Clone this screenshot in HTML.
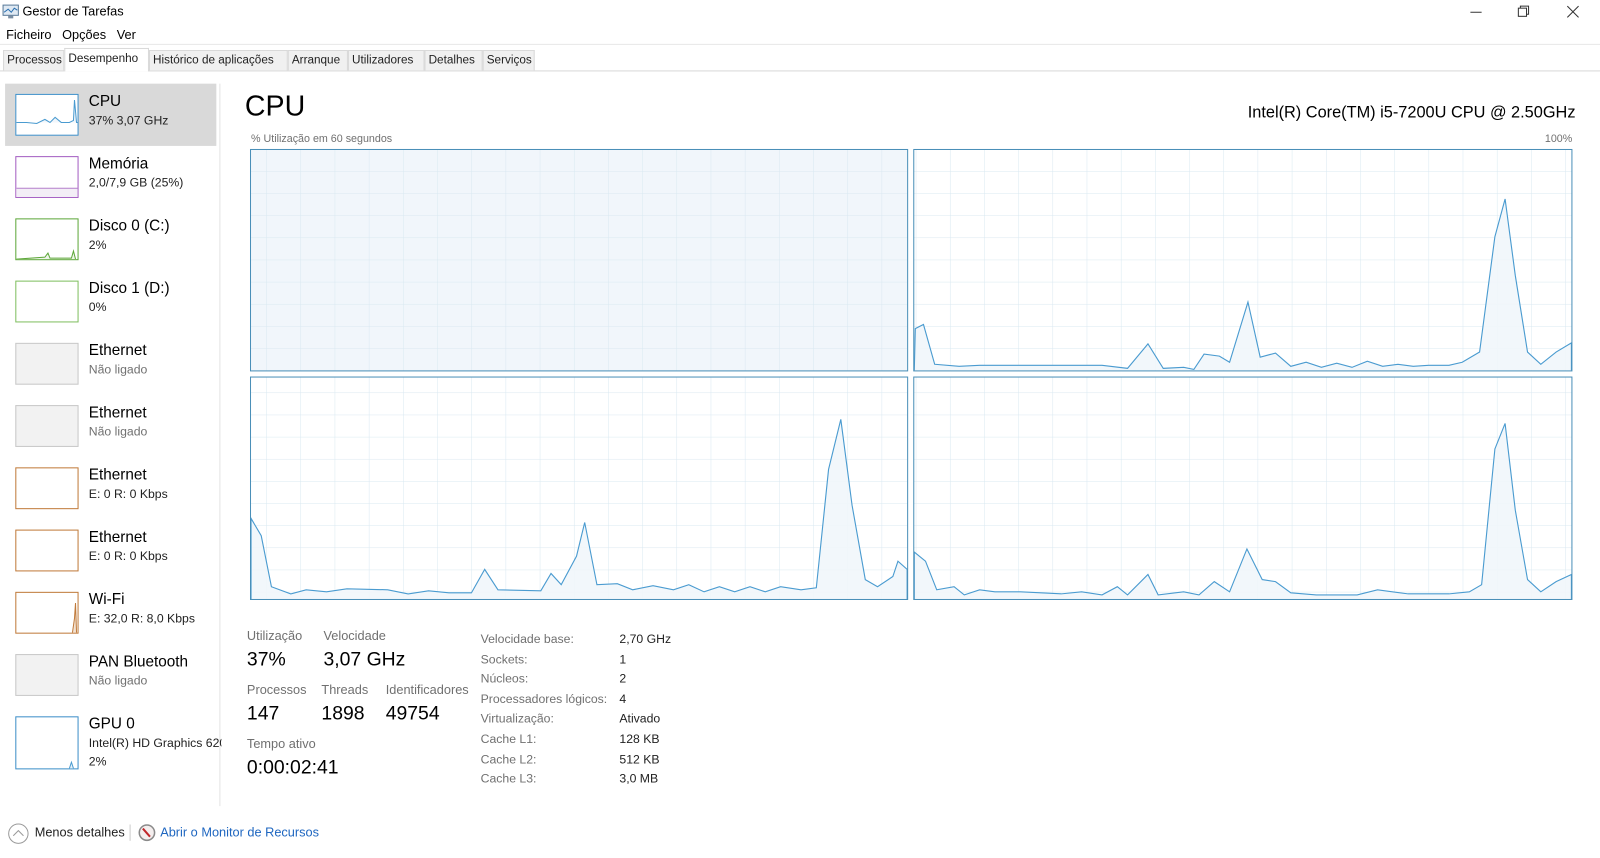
<!DOCTYPE html>
<html><head><meta charset="utf-8"><style>
*{margin:0;padding:0;box-sizing:border-box}
html,body{width:1600px;height:858px;overflow:hidden;background:#fff}
#w{width:1568px;height:841px;position:relative;transform:scale(1.0204);transform-origin:0 0;font-family:"Liberation Sans",sans-serif;color:#000}
.a{position:absolute;white-space:nowrap}
.tab{position:absolute;top:49px;height:20px;font-size:11.5px;line-height:19px;padding-left:3px;border:1px solid #d9d9d9;border-bottom:none;background:#f0f0f0;color:#222;white-space:nowrap;overflow:hidden}
.it{position:absolute;left:5px;width:207px;height:61px}
.th{position:absolute;left:10px;top:10px;width:62px;height:41px;border:1px solid}
.t1{position:absolute;left:82px;top:9px;font-size:15px;white-space:nowrap}
.t2{position:absolute;left:82px;top:29px;font-size:12px;color:#222;white-space:nowrap}
.lb{font-size:12.5px;color:#707070}
.vl{font-size:19px;color:#000}
.sl{font-size:12px;color:#707070}
.sv{font-size:12px;color:#222}
</style></head><body><div id="w">
<svg class="a" style="left:2px;top:4px" width="17" height="15" viewBox="0 0 17 15"><rect x="1" y="1" width="15" height="10" fill="#dfe9f3" stroke="#5a7b9a"/><polyline points="2,8 6,5 9,8 12,4 15,6" fill="none" stroke="#2a6fb0"/><rect x="6" y="11" width="5" height="3" fill="#7a8ea3"/></svg>
<div class="a" style="left:22px;top:4px;font-size:12.5px">Gestor de Tarefas</div>
<svg class="a" style="left:1435px;top:5px" width="120" height="16"><line x1="6" y1="7" x2="17" y2="7" stroke="#333"/><rect x="53" y="3" width="8" height="8" fill="none" stroke="#333"/><path d="M55 3V1h8v8h-2" fill="none" stroke="#333"/><path d="M101 1l11 11M112 1l-11 11" stroke="#333"/></svg>
<div class="a" style="left:6px;top:27px;font-size:12.5px">Ficheiro&nbsp;&nbsp; Opções&nbsp;&nbsp; Ver</div>
<div class="a" style="left:0;top:43px;width:1568px;height:1px;background:#e8e8e8"></div>
<div class="a" style="left:0;top:69px;width:1568px;height:1px;background:#d9d9d9"></div>
<div class="tab" style="left:3px;width:60px">Processos</div>
<div class="tab" style="left:146px;width:136px">Histórico de aplicações</div>
<div class="tab" style="left:282px;width:59px">Arranque</div>
<div class="tab" style="left:341px;width:75px">Utilizadores</div>
<div class="tab" style="left:416px;width:57px">Detalhes</div>
<div class="tab" style="left:473px;width:51px">Serviços</div>
<div class="tab" style="left:63px;top:47px;height:23px;width:83px;background:#fff;line-height:20px">Desempenho</div>

<div class="a" style="left:215px;top:82px;width:1px;height:708px;background:#e3e3e3"></div>

<div class="it" style="top:82px;background:#d9d9d9"><div class="th" style="border-color:#3d8fc8;background:#fff"><svg width="60" height="39" style="position:absolute;left:0;top:0"><polyline points="0,27 10,27 20,28 28,24 33,27 38,22 44,27 52,27 56,25 57,5 59,27 60,27" fill="#f1f6fb" stroke="#4a9bd0"/></svg></div><div class="t1">CPU</div><div class="t2">37% 3,07 GHz</div></div>
<div class="it" style="top:143px"><div class="th" style="border-color:#a45ec2"><div style="position:absolute;left:0;bottom:0;width:60px;height:9px;background:#f3eef6;border-top:1px solid #b683cc"></div></div><div class="t1">Memória</div><div class="t2">2,0/7,9 GB (25%)</div></div>
<div class="it" style="top:204px"><div class="th" style="border-color:#5ea73a"><svg width="60" height="39" style="position:absolute;left:0;top:0"><polyline points="0,39 28,37 31,33 33,38 54,38 56,31 58,39" fill="#eef6ea" stroke="#5ea73a"/></svg></div><div class="t1">Disco 0 (C:)</div><div class="t2">2%</div></div>
<div class="it" style="top:265px"><div class="th" style="border-color:#7fbf5f"></div><div class="t1">Disco 1 (D:)</div><div class="t2">0%</div></div>
<div class="it" style="top:326px"><div class="th" style="border-color:#c8c8c8;background:#f2f2f2"></div><div class="t1">Ethernet</div><div class="t2" style="color:#707070">Não ligado</div></div>
<div class="it" style="top:387px"><div class="th" style="border-color:#c8c8c8;background:#f2f2f2"></div><div class="t1">Ethernet</div><div class="t2" style="color:#707070">Não ligado</div></div>
<div class="it" style="top:448px"><div class="th" style="border-color:#c07a3a"></div><div class="t1">Ethernet</div><div class="t2">E: 0 R: 0 Kbps</div></div>
<div class="it" style="top:509px"><div class="th" style="border-color:#c07a3a"></div><div class="t1">Ethernet</div><div class="t2">E: 0 R: 0 Kbps</div></div>
<div class="it" style="top:570px"><div class="th" style="border-color:#c07a3a"><svg width="60" height="39" style="position:absolute;left:0;top:0"><polyline points="55,39 57,25 58,10 59,39" fill="#f3e3d3" stroke="#c07a3a"/></svg></div><div class="t1">Wi-Fi</div><div class="t2">E: 32,0 R: 8,0 Kbps</div></div>
<div class="it" style="top:631px"><div class="th" style="border-color:#c8c8c8;background:#f2f2f2"></div><div class="t1">PAN Bluetooth</div><div class="t2" style="color:#707070">Não ligado</div></div>
<div class="it" style="top:692px;height:70px"><div class="th" style="border-color:#3d8fc8;height:52px"><svg width="60" height="50" style="position:absolute;left:0;top:0"><polyline points="52,50 54,44 56,50" fill="#e8f1f8" stroke="#4a9bd0"/></svg></div><div class="t1">GPU 0</div><div class="t2" style="width:130px;overflow:hidden">Intel(R) HD Graphics 620</div><div class="t2" style="top:47px">2%</div></div>

<div class="a" style="left:240px;top:88px;font-size:28px">CPU</div>
<div class="a" style="right:24px;top:102px;font-size:16px">Intel(R) Core(TM) i5-7200U CPU @ 2.50GHz</div>
<div class="a" style="left:246px;top:130px;font-size:10.5px;color:#707070">% Utilização em 60 segundos</div>
<div class="a" style="left:1514px;top:130px;font-size:10.5px;color:#707070">100%</div>

<svg class="a" style="left:0;top:0" width="1568" height="600">
<defs>
<pattern id="g" x="261" y="146" width="33.5" height="21.7" patternUnits="userSpaceOnUse"><path d="M0 0V21.7M0 0H33.5" stroke="#d9e8f1" stroke-width="1" fill="none"/></pattern>
</defs>
<rect x="245.5" y="146.5" width="644" height="217" fill="#f1f6fb"/>
<rect x="245.5" y="146.5" width="644" height="217" fill="url(#g)"/>
<rect x="895.5" y="146.5" width="645" height="217" fill="url(#g)"/>
<rect x="245.5" y="369.5" width="644" height="218" fill="url(#g)"/>
<rect x="895.5" y="369.5" width="645" height="218" fill="url(#g)"/>
<g fill="#f1f6fb" fill-opacity="0.9" stroke="#4a9bd0" stroke-width="1.1">
<polyline points="896,363 897,322 905,318 916,357 940,359 960,358 1000,358 1080,358 1105,361 1125,337 1140,361 1160,360 1170,362 1180,347 1195,349 1205,355 1223,296 1235,350 1250,346 1265,359 1280,355 1295,360 1310,356 1325,360 1340,354 1355,359 1370,357 1385,359 1400,358 1420,358 1433,355 1450,345 1465,232 1475,195 1485,270 1497,345 1510,357 1525,345 1540,336 1540,363"/>
<polyline points="246,587 246,508 256,525 266,575 285,582 300,578 320,580 340,577 380,578 400,582 420,579 440,581 462,581 475,558 488,578 530,579 540,562 550,573 565,545 573,512 585,573 605,572 620,578 640,574 660,578 675,573 690,580 705,575 720,580 735,575 750,580 765,575 785,578 800,576 812,460 824,411 835,495 848,568 860,575 875,565 880,550 889,558 889,587"/>
<polyline points="896,587 896,541 907,550 918,578 935,575 945,583 960,578 975,580 1000,580 1040,582 1060,580 1080,583 1095,575 1105,583 1125,563 1135,583 1160,580 1175,583 1190,570 1205,580 1222,538 1237,568 1250,570 1265,581 1290,583 1330,583 1350,578 1380,582 1420,582 1440,580 1452,573 1465,440 1475,415 1485,500 1497,568 1510,580 1525,570 1540,563 1540,587"/>
</g>
<g fill="none" stroke="#4a8fb8" stroke-width="1">
<rect x="245.5" y="146.5" width="644" height="217"/>
<rect x="895.5" y="146.5" width="645" height="217"/>
<rect x="245.5" y="369.5" width="644" height="218"/>
<rect x="895.5" y="369.5" width="645" height="218"/>
</g>
</svg>

<div class="a lb" style="left:242px;top:616px">Utilização</div>
<div class="a vl" style="left:242px;top:636px">37%</div>
<div class="a lb" style="left:317px;top:616px">Velocidade</div>
<div class="a vl" style="left:317px;top:636px">3,07 GHz</div>
<div class="a lb" style="left:242px;top:669px">Processos</div>
<div class="a vl" style="left:242px;top:689px">147</div>
<div class="a lb" style="left:315px;top:669px">Threads</div>
<div class="a vl" style="left:315px;top:689px">1898</div>
<div class="a lb" style="left:378px;top:669px">Identificadores</div>
<div class="a vl" style="left:378px;top:689px">49754</div>
<div class="a lb" style="left:242px;top:722px">Tempo ativo</div>
<div class="a vl" style="left:242px;top:742px">0:00:02:41</div>

<div class="a sl" style="left:471px;top:617px;line-height:19.6px">Velocidade base:<br>Sockets:<br>Núcleos:<br>Processadores lógicos:<br>Virtualização:<br>Cache L1:<br>Cache L2:<br>Cache L3:</div>
<div class="a sv" style="left:607px;top:617px;line-height:19.6px">2,70 GHz<br>1<br>2<br>4<br>Ativado<br>128 KB<br>512 KB<br>3,0 MB</div>

<svg class="a" style="left:7px;top:806px" width="22" height="22"><circle cx="11" cy="11" r="9.5" fill="none" stroke="#9a9a9a"/><polyline points="6,13 11,8 16,13" fill="none" stroke="#9a9a9a"/></svg>
<div class="a" style="left:34px;top:809px;font-size:12.5px;color:#222">Menos detalhes</div>
<div class="a" style="left:127px;top:808px;width:1px;height:16px;background:#ccc"></div>
<svg class="a" style="left:135px;top:807px" width="18" height="18"><circle cx="9" cy="9" r="7.5" fill="#f4eeee" stroke="#8a8a8a" stroke-width="1.5"/><path d="M5 5l7 8" stroke="#c0262a" stroke-width="2"/></svg>
<div class="a" style="left:157px;top:809px;font-size:12.5px;color:#1e66c0">Abrir o Monitor de Recursos</div>
</div></body></html>
